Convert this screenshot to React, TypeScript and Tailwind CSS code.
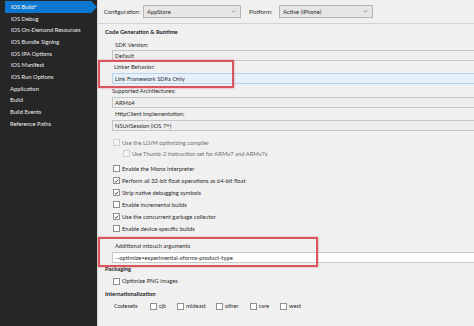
import React from "react";

const sidebarItems = [
  "iOS Build*",
  "iOS Debug",
  "iOS On-Demand Resources",
  "iOS Bundle Signing",
  "iOS IPA Options",
  "iOS Manifest",
  "iOS Run Options",
  "Application",
  "Build",
  "Build Events",
  "Reference Paths",
];

const Check = ({ checked, disabled }: { checked?: boolean; disabled?: boolean }) => (
  <span
    className={`flex h-[7px] w-[7px] shrink-0 items-center justify-center border ${
      disabled ? "border-[#cfcfcf] bg-[#f4f4f4]" : "border-[#8f8f8f] bg-white"
    }`}
  >
    {checked && (
      <svg viewBox="0 0 8 8" className="h-[6px] w-[6px]">
        <path d="M1.2 4.2 L3.1 6 L6.8 1.6" fill="none" stroke="#2a2a2a" strokeWidth="1.3" />
      </svg>
    )}
  </span>
);

const CheckRow = ({
  label,
  checked,
  disabled,
  indent = "ml-[15px]",
  top,
}: {
  label: string;
  checked?: boolean;
  disabled?: boolean;
  indent?: string;
  top: string;
}) => (
  <div className={`flex h-[11px] items-center gap-[2px] ${indent} ${top}`}>
    <Check checked={checked} disabled={disabled} />
    <span className={disabled ? "text-[#6f6f6f]" : ""}>{label}</span>
  </div>
);

const Dropdown = ({ value, width }: { value: string; width: string }) => (
  <div
    className={`flex h-[13px] ${width} items-center justify-between border border-[#b4b4b4] bg-[#e6e6e6] pl-[3px] pr-[4px]`}
  >
    <span>{value}</span>
    <svg viewBox="0 0 6 4" className="h-[3px] w-[5px]">
      <path d="M0.5 0.5 L3 3 L5.5 0.5" fill="none" stroke="#777" strokeWidth="0.9" />
    </svg>
  </div>
);

const Field = ({ value, tone }: { value: string; tone: "gray" | "blue" | "white" }) => {
  const look =
    tone === "blue"
      ? "border-[#b7d4ef] bg-[#e5f0fb]"
      : tone === "white"
      ? "border-[#c9c9c9] bg-white"
      : "border-[#c6c6c6] bg-[#eeeeee]";
  return (
    <div className={`ml-[14px] flex h-[11px] items-center border border-r-0 pl-[2px] ${look}`}>{value}</div>
  );
};

export default function App() {
  return (
    <div className="flex h-[326px] w-[474px] overflow-hidden bg-[#f0f0f0] font-['Lato','Open_Sans',sans-serif] text-[5.8px] leading-none text-[#2b2b2b]">
      <aside className="relative w-[97px] shrink-0 bg-[#262626] pt-[1px] text-[#ececec]">
        {sidebarItems.map((item, i) => (
          <div
            key={item}
            className={`relative flex h-[11.7px] items-center ${
              i === 0 ? "ml-[5px] mr-[5px] bg-[#0e78d0] pl-[6px] text-white" : i >= 7 ? "pl-[10px]" : "pl-[11px]"
            }`}
          >
            {item}
            {i === 0 && (
              <span className="absolute right-[-5px] top-[1px] h-0 w-0 border-y-[5px] border-l-[5px] border-y-transparent border-l-[#0e78d0]" />
            )}
          </div>
        ))}
      </aside>

      <main className="relative flex-1 border-l border-[#d8d8d8]">
        <div className="flex h-[24px] items-center border-b border-[#d2d2d2] pl-[6px]">
          <span className="w-[39px]">Configuration:</span>
          <Dropdown value="AppStore" width="w-[98px]" />
          <span className="ml-[8px] w-[30px]">Platform:</span>
          <Dropdown value="Active (iPhone)" width="w-[94px]" />
        </div>

        <div className="flex h-[15px] items-center pl-[7px] font-bold text-[#1a1a1a]">Code Generation &amp; Runtime</div>
        <div className="flex h-[11px] items-center pl-[17px]">SDK Version:</div>
        <Field value="Default" tone="gray" />
        <div className="flex h-[12px] items-center pl-[16px]">Linker Behavior:</div>
        <Field value="Link Framework SDKs Only" tone="blue" />
        <div className="flex h-[13px] items-center pl-[14px]">Supported Architectures:</div>
        <Field value="ARM64" tone="gray" />
        <div className="flex h-[12px] items-center pl-[17px]">HttpClient Implementation:</div>
        <Field value="NSUrlSession (iOS 7+)" tone="gray" />

        <CheckRow label="Use the LLVM optimizing compiler" disabled top="mt-[6px]" />
        <CheckRow label="Use Thumb-2 instruction set for ARMv7 and ARMv7s" disabled indent="ml-[25px]" top="" />
        <CheckRow label="Enable the Mono interpreter" top="mt-[4px]" />
        <CheckRow label="Perform all 32-bit float operations as 64-bit float" checked top="mt-[1px]" />
        <CheckRow label="Strip native debugging symbols" checked top="mt-[1px]" />
        <CheckRow label="Enable incremental builds" top="mt-[1px]" />
        <CheckRow label="Use the concurrent garbage collector" checked top="mt-[1px]" />
        <CheckRow label="Enable device-specific builds" top="mt-[1px]" />

        <div className="mt-[6px] flex h-[12px] items-center pl-[17px]">Additional mtouch arguments</div>
        <Field value="--optimize=experimental-xforms-product-type" tone="white" />

        <div className="flex h-[12px] items-center pl-[7px] font-bold text-[#1a1a1a]">Packaging</div>
        <CheckRow label="Optimize PNG images" top="h-[12px]" />
        <div className="mt-[1px] flex h-[12px] items-center pl-[7px] font-bold text-[#1a1a1a]">Internationalization</div>
        <div className="flex h-[12px] items-center pl-[16px]">
          <span className="w-[36px]">Codesets</span>
          {[
            ["cjk", "w-[27px]"],
            ["mideast", "w-[39px]"],
            ["other", "w-[34px]"],
            ["rare", "w-[30px]"],
            ["west", "w-[30px]"],
          ].map(([name, w]) => (
            <div key={name} className={`flex items-center gap-[2px] ${w}`}>
              <Check />
              <span>{name}</span>
            </div>
          ))}
        </div>

        <div className="pointer-events-none absolute left-0 top-[60px] h-[28px] w-[136px] border-2 border-[#d9545f] shadow-[0_0_2px_rgba(200,60,70,0.5)]" />
        <div className="pointer-events-none absolute left-0 top-[237px] h-[30px] w-[220px] border-2 border-[#d9545f] shadow-[0_0_2px_rgba(200,60,70,0.5)]" />
      </main>
    </div>
  );
}
